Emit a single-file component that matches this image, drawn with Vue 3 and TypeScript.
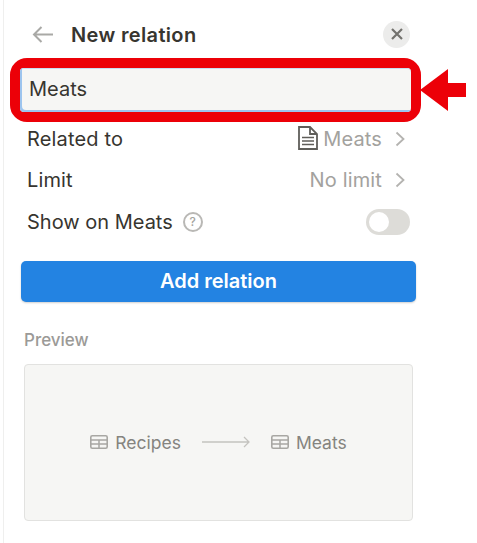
<script setup lang="ts">
const rows = [
  { label: 'Related to', value: 'Meats', doc: true },
  { label: 'Limit', value: 'No limit', doc: false },
]
</script>

<template>
  <div class="panel">
    <header class="head">
      <svg class="back" viewBox="0 0 21 17" width="21" height="17" aria-hidden="true">
        <path d="M21 8.500H2M9.500 1 2 8.500 9.500 16" fill="none" stroke="#a9a9a6" stroke-width="2" />
      </svg>
      <h1 class="title">New relation</h1>
      <button class="close" aria-label="Close">
        <svg viewBox="0 0 12 12" width="12" height="12" aria-hidden="true">
          <path d="M1 1l10 10M11 1 1 11" fill="none" stroke="#73726e" stroke-width="2.2" />
        </svg>
      </button>
    </header>

    <div class="name-row">
      <div class="frame">
        <div class="input">Meats</div>
      </div>
      <svg class="pointer" viewBox="0 0 47 42" width="47" height="42" aria-hidden="true">
        <path d="M0 21 28 0v14h18v14H28v14z" fill="#ec0008" />
      </svg>
    </div>

    <div class="rows">
      <div v-for="row in rows" :key="row.label" class="row">
        <span class="label">{{ row.label }}</span>
        <span class="value">
          <svg v-if="row.doc" class="doc" viewBox="0 0 20 24" width="20" height="24" aria-hidden="true">
            <path d="M1 1h11l7 7v15H1zM12 1v7h7" fill="none" stroke="#5f5e5a" stroke-width="1.8" />
            <path d="M4 11.500h12M4 15h12M4 18.500h12" fill="none" stroke="#5f5e5a" stroke-width="1.6" />
          </svg>
          {{ row.value }}
          <svg class="chev" viewBox="0 0 10 16" width="10" height="16" aria-hidden="true">
            <path d="M1.500 1.500 8.500 8l-7 6.500" fill="none" stroke="#b4b3b0" stroke-width="1.800" />
          </svg>
        </span>
      </div>
      <div class="row">
        <span class="label tight">Show on Meats
          <span class="help">?</span>
        </span>
        <span class="toggle"><span class="knob"></span></span>
      </div>
    </div>

    <button class="add">Add relation</button>

    <div class="preview-label">Preview</div>
    <div class="preview">
      <span class="item">
        <svg viewBox="0 0 18 14" width="18" height="14" aria-hidden="true">
          <rect x="0.800" y="0.800" width="16.400" height="12.400" rx="1.500" fill="none" stroke="#a8a7a3" stroke-width="1.600" />
          <path d="M1 5h16M1 9h16M9 5v8" fill="none" stroke="#a8a7a3" stroke-width="1.500" />
        </svg>
        Recipes
      </span>
      <svg class="link" viewBox="0 0 48 12" width="48" height="12" aria-hidden="true">
        <path d="M0 6h47M42 1l5 5-5 5" fill="none" stroke="#c4c3bf" stroke-width="1.300" />
      </svg>
      <span class="item">
        <svg viewBox="0 0 18 14" width="18" height="14" aria-hidden="true">
          <rect x="0.800" y="0.800" width="16.400" height="12.400" rx="1.500" fill="none" stroke="#a8a7a3" stroke-width="1.600" />
          <path d="M1 5h16M1 9h16M9 5v8" fill="none" stroke="#a8a7a3" stroke-width="1.500" />
        </svg>
        Meats
      </span>
    </div>
  </div>
</template>

<style>
html, body { margin: 0; background: #fff; }
</style>

<style scoped>
.panel {
  box-sizing: border-box;
  width: 477px;
  height: 543px;
  overflow: hidden;
  margin-left: 3px;
  border-left: 1px solid #efefee;
  padding: 20px 0 0 6px;
  font-family: Inter, "Liberation Sans", sans-serif;
  color: #37352f;
  position: relative;
}
.head {
  display: flex;
  align-items: center;
  width: 400px;
  height: 28px;
  padding-left: 22px;
  box-sizing: border-box;
}
.back { flex: none; }
.title {
  margin: 2px 0 0 18px;
  font-size: 20px;
  font-weight: 600;
  letter-spacing: 0.35px;
  line-height: 28px;
  flex: 1;
}
.close {
  width: 27px;
  height: 27px;
  border: 0;
  padding: 0;
  border-radius: 50%;
  background: #ececeb;
  display: flex;
  align-items: center;
  justify-content: center;
}
.name-row {
  display: flex;
  align-items: center;
  margin-top: 10px;
}
.frame {
  box-sizing: border-box;
  width: 411px;
  height: 64px;
  border: 10px solid #ec0008;
  border-radius: 17px;
  background: #fff;
  flex: none;
}
.input {
  box-sizing: border-box;
  height: 100%;
  background: #f6f6f4;
  border-radius: 4px;
  box-shadow: inset 2px -2px 0 #9cc4ee, inset 0 1px 0 #c9dcf0;
  padding-left: 9px;
  font-size: 20px;
  line-height: 42px;
}
.pointer {
  margin-left: -1px;
  flex: none;
}
.rows {
  width: 401px;
  margin-top: -4px;
  padding-left: 17px;
  padding-right: 6px;
  box-sizing: border-box;
}
.row {
  display: flex;
  align-items: center;
  justify-content: space-between;
  height: 41.500px;
  font-size: 20px;
  letter-spacing: 0.15px;
}
.label {
  display: flex;
  align-items: center;
  gap: 10px;
}
.tight { letter-spacing: 0; }
.value {
  display: flex;
  align-items: center;
  color: #a3a29e;
  gap: 0;
}
.doc { margin-right: 5px; margin-top: -1px; }
.chev { margin-left: 13px; margin-right: 0; }
.help {
  box-sizing: border-box;
  width: 20px;
  height: 20px;
  border: 2px solid #b9b8b5;
  border-radius: 50%;
  color: #a5a4a0;
  font-size: 12px;
  font-weight: 500;
  display: flex;
  align-items: center;
  justify-content: center;
}
.toggle {
  box-sizing: border-box;
  width: 44px;
  height: 26px;
  border-radius: 13px;
  background: #dddcd8;
  padding: 3px;
  display: flex;
  margin-right: -5px;
}
.knob {
  width: 20px;
  height: 20px;
  border-radius: 50%;
  background: #fff;
}
.add {
  display: block;
  width: 395px;
  height: 41px;
  margin: 18px 0 0 11px;
  border: 0;
  border-radius: 5px;
  background: #2383e2;
  box-shadow: 0 1px 2px rgba(15, 15, 15, 0.2);
  color: #fff;
  font-family: inherit;
  font-size: 20px;
  font-weight: 600;
}
.preview-label {
  margin: 28px 0 0 14px;
  font-size: 17px;
  font-weight: 500;
  line-height: 20px;
  color: #9b9a97;
}
.preview {
  box-sizing: border-box;
  width: 389px;
  height: 157px;
  margin: 14px 0 0 14px;
  border: 1.500px solid #e2e2e0;
  border-radius: 4px;
  background: #f6f6f4;
  display: flex;
  align-items: center;
  justify-content: center;
  gap: 21px;
  font-size: 17.500px;
  color: #85847f;
}
.item {
  display: flex;
  align-items: center;
  gap: 7px;
}
</style>
